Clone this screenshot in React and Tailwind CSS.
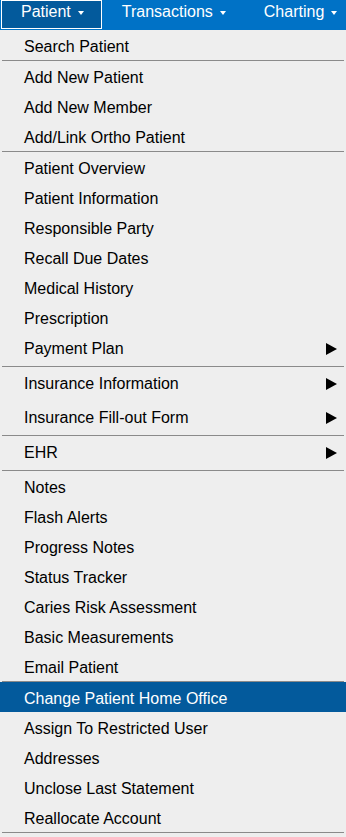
import React from "react";

const groups = [
  [{ label: "Search Patient" }],
  [{ label: "Add New Patient" }, { label: "Add New Member" }, { label: "Add/Link Ortho Patient" }],
  [
    { label: "Patient Overview" },
    { label: "Patient Information" },
    { label: "Responsible Party" },
    { label: "Recall Due Dates" },
    { label: "Medical History" },
    { label: "Prescription" },
    { label: "Payment Plan", sub: true },
  ],
  [
    { label: "Insurance Information", sub: true },
    { label: "Insurance Fill-out Form", sub: true },
  ],
  [{ label: "EHR", sub: true }],
  [
    { label: "Notes" },
    { label: "Flash Alerts" },
    { label: "Progress Notes" },
    { label: "Status Tracker" },
    { label: "Caries Risk Assessment" },
    { label: "Basic Measurements" },
    { label: "Email Patient" },
  ],
  [
    { label: "Change Patient Home Office", active: true },
    { label: "Assign To Restricted User" },
    { label: "Addresses" },
    { label: "Unclose Last Statement" },
    { label: "Reallocate Account" },
  ],
];

function Caret() {
  return (
    <svg width="6" height="4" viewBox="0 0 6 4" className="ml-[7px] mt-[10px]">
      <path d="M0 0h6L3 4z" fill="#fff" />
    </svg>
  );
}

function Tab({ label, active }) {
  return (
    <div
      className={
        active
          ? "flex items-start h-[29px] pl-[19px] pr-[17px] border border-white bg-[#035a9c] ml-px"
          : "flex items-start h-[29px] pl-[20px] pr-[18px] pt-px"
      }
    >
      <span className="text-white text-[16px] leading-[22px]">{label}</span>
      <Caret />
    </div>
  );
}

function Item({ label, sub, active }) {
  return (
    <div
      className={
        (sub ? "h-[34px] " : "h-[30px] ") +
        "flex items-start justify-between pl-[24px] pr-[9px] leading-[34px] text-[16px] " +
        (active ? "bg-[#035a9c] text-white" : "text-black")
      }
    >
      <span>{label}</span>
      {sub && (
        <svg width="11" height="12" viewBox="0 0 11 12" className="mt-[11px]">
          <path d="M0 0L11 6L0 12z" fill="#000" />
        </svg>
      )}
    </div>
  );
}

export default function App() {
  return (
    <div
      className="min-h-screen bg-[#eeeeee]"
      style={{ fontFamily: '"Liberation Sans", Arial, sans-serif' }}
    >
      <div className="flex h-[30px] bg-[#0072c6]">
        <Tab label="Patient" active />
        <Tab label="Transactions" />
        <Tab label="Charting" />
      </div>
      <div className="flex flex-col">
        {groups.map((g, i) => (
          <div key={i} className="flex flex-col">
            {g.map((it) => (
              <Item key={it.label} {...it} />
            ))}
            <div className="h-px mx-[2px] bg-[#8a8a8a]" />
          </div>
        ))}
      </div>
    </div>
  );
}
